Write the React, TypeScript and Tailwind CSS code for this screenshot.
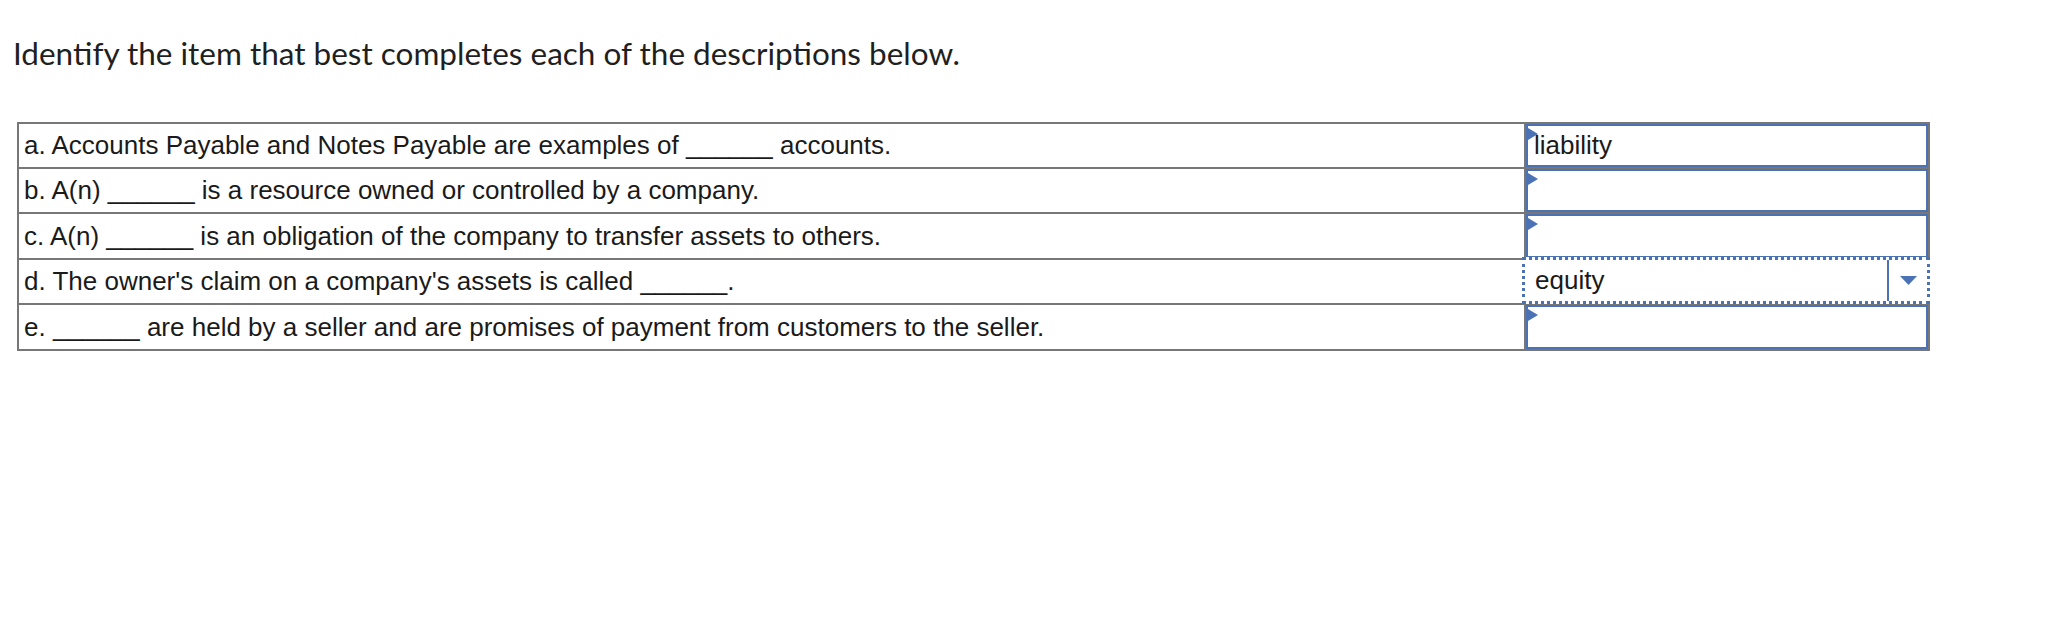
import React from "react";

const rows = [
  { id: "a", h: "h-[43px]", kind: "text", value: "liability" },
  { id: "b", h: "h-[45px]", kind: "text", value: "" },
  { id: "c", h: "h-[46px]", kind: "text", value: "" },
  { id: "d", h: "h-[45px]", kind: "select", value: "equity" },
  { id: "e", h: "h-[46px]", kind: "text", value: "" },
];

const BLANK = "______";

function Description({ id }: { id: string }) {
  switch (id) {
    case "a":
      return <>a. Accounts Payable and Notes Payable are examples of {BLANK} accounts.</>;
    case "b":
      return <>b. A(n) {BLANK} is a resource owned or controlled by a company.</>;
    case "c":
      return <>c. A(n) {BLANK} is an obligation of the company to transfer assets to others.</>;
    case "d":
      return <>d. The owner's claim on a company's assets is called {BLANK}.</>;
    default:
      return <>e. {BLANK} are held by a seller and are promises of payment from customers to the seller.</>;
  }
}

function Marker() {
  return (
    <svg className="absolute left-0 top-[2px]" width="10" height="12" viewBox="0 0 10 12">
      <polygon points="0,0 10,6 0,12" fill="#4a72b5" />
    </svg>
  );
}

function TextInput({ value }: { value: string }) {
  return (
    <div className="relative h-full w-full border-2 border-[#4a72b5] bg-white">
      <Marker />
      <div className="flex h-full items-center pl-[6px] text-[26px] text-[#1a1a1a]">{value}</div>
    </div>
  );
}

function SelectInput({ value }: { value: string }) {
  return (
    <div className="relative h-full w-full">
      <div className="absolute -top-[3px] -left-[4px] -right-[2px] -bottom-[1px] flex border-[3px] border-dotted border-[#4a72b5] bg-white">
        <div className="flex flex-1 items-center pl-[10px] text-[26px] text-[#1a1a1a]">{value}</div>
        <div className="w-[2px] bg-[#4a72b5]" />
        <div className="flex w-[38px] items-center justify-center">
          <svg width="17" height="9" viewBox="0 0 17 9">
            <polygon points="0,0 17,0 8.5,9" fill="#4a72b5" />
          </svg>
        </div>
      </div>
    </div>
  );
}

export default function App() {
  return (
    <div className="min-h-[644px] bg-white pt-[33px]">
      <h1
        className="ml-[13px] text-[31.5px] leading-[40px] text-[#1f1f1f]"
        style={{ fontFamily: "Lato, 'Open Sans', sans-serif" }}
      >
        Identify the item that best completes each of the descriptions below.
      </h1>

      <div
        className="ml-[17px] mt-[49px] w-[1913px] border-2 border-[#777]"
        style={{ fontFamily: "'Liberation Sans', Arial, sans-serif" }}
      >
        {rows.map((r, i) => (
          <div key={r.id} className={`flex ${r.h} ${i > 0 ? "border-t-2 border-[#777]" : ""}`}>
            <div className="flex w-[1507px] items-center border-r-2 border-[#777] pl-[5px] text-[26px] text-[#1a1a1a] whitespace-pre">
              <Description id={r.id} />
            </div>
            <div className="flex-1">
              {r.kind === "select" ? <SelectInput value={r.value} /> : <TextInput value={r.value} />}
            </div>
          </div>
        ))}
      </div>
    </div>
  );
}
